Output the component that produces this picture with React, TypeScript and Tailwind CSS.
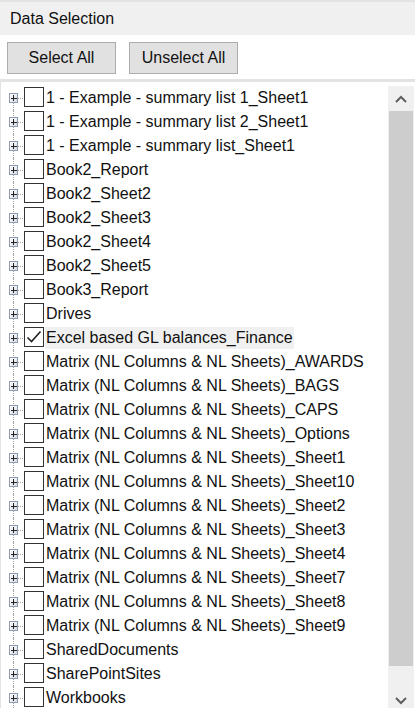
import React, { useState } from 'react';

const items: string[] = [
  '1 - Example - summary list 1_Sheet1',
  '1 - Example - summary list 2_Sheet1',
  '1 - Example - summary list_Sheet1',
  'Book2_Report',
  'Book2_Sheet2',
  'Book2_Sheet3',
  'Book2_Sheet4',
  'Book2_Sheet5',
  'Book3_Report',
  'Drives',
  'Excel based GL balances_Finance',
  'Matrix (NL Columns & NL Sheets)_AWARDS',
  'Matrix (NL Columns & NL Sheets)_BAGS',
  'Matrix (NL Columns & NL Sheets)_CAPS',
  'Matrix (NL Columns & NL Sheets)_Options',
  'Matrix (NL Columns & NL Sheets)_Sheet1',
  'Matrix (NL Columns & NL Sheets)_Sheet10',
  'Matrix (NL Columns & NL Sheets)_Sheet2',
  'Matrix (NL Columns & NL Sheets)_Sheet3',
  'Matrix (NL Columns & NL Sheets)_Sheet4',
  'Matrix (NL Columns & NL Sheets)_Sheet7',
  'Matrix (NL Columns & NL Sheets)_Sheet8',
  'Matrix (NL Columns & NL Sheets)_Sheet9',
  'SharedDocuments',
  'SharePointSites',
  'Workbooks',
];

const Expander: React.FC<{ first: boolean }> = ({ first }) => (
  <div className="relative w-[9px] h-full flex items-center">
    {/* dotted tree line */}
    <div
      className={`absolute left-[4px] w-0 border-l border-dotted border-[#a0a0a0] ${first ? 'top-[12px]' : 'top-0'} bottom-0`}
    />
    <div className="absolute left-[9px] top-[12px] w-[5px] h-0 border-t border-dotted border-[#a0a0a0]" />
    <div className="relative w-[10px] h-[10px] border border-[#8e9bb0] bg-[linear-gradient(135deg,#ffffff,#d6dce6)] flex items-center justify-center">
      <div className="absolute w-[6px] h-[1px] bg-[#222]" />
      <div className="absolute w-[1px] h-[6px] bg-[#222]" />
    </div>
  </div>
);

const Row: React.FC<{ label: string; first: boolean; checked: boolean; onToggle: () => void }> = ({
  label,
  first,
  checked,
  onToggle,
}) => (
  <div className="h-[24px] flex items-center pl-[8px]">
    <Expander first={first} />
    <button
      onClick={onToggle}
      className="ml-[6px] w-[20px] h-[20px] -mt-[2px] border border-[#333] bg-white flex items-center justify-center"
    >
      {checked && (
        <svg width="16" height="14" viewBox="0 0 16 14">
          <path d="M1.5 7.5 L5.5 11.5 L14.5 1.5" fill="none" stroke="#222" strokeWidth="1.6" />
        </svg>
      )}
    </button>
    <span className={`ml-[1px] pl-[1px] pr-[1px] whitespace-nowrap leading-[22px] ${checked ? 'bg-[#f0f0f0]' : ''}`}>
      {label}
    </span>
  </div>
);

const App: React.FC = () => {
  const [checked, setChecked] = useState<Set<number>>(new Set([10]));

  const toggle = (i: number) => {
    const next = new Set(checked);
    if (next.has(i)) next.delete(i);
    else next.add(i);
    setChecked(next);
  };

  return (
    <div className="w-[415px] h-[708px] overflow-hidden bg-white text-[16px] text-[#111] flex flex-col font-['Liberation_Sans',Arial,sans-serif]">
      <div className="h-[35px] shrink-0 bg-[#f0f0f0] border-t-2 border-[#e3e3e3] flex items-center pl-[10px]">
        Data Selection
      </div>

      <div className="h-[44px] shrink-0 flex items-start pt-[7px] pl-[7px] gap-[13px]">
        <button
          onClick={() => setChecked(new Set(items.map((_, i) => i)))}
          className="w-[109px] h-[32px] bg-[#e1e1e1] border border-[#adadad]"
        >
          Select All
        </button>
        <button
          onClick={() => setChecked(new Set())}
          className="w-[109px] h-[32px] bg-[#e1e1e1] border border-[#adadad]"
        >
          Unselect All
        </button>
      </div>

      <div className="h-[3px] shrink-0 bg-[#e3e3e3]" />

      <div className="flex-1 flex min-h-0 border-l border-[#e3e3e3]">
        <div className="flex-1 pt-[4px] overflow-hidden">
          {items.map((label, i) => (
            <Row
              key={label}
              label={label}
              first={i === 0}
              checked={checked.has(i)}
              onToggle={() => toggle(i)}
            />
          ))}
        </div>

        <div className="w-[26px] mr-[1px] mt-[4px] shrink-0 flex flex-col bg-[#f0f0f0]">
          <div className="h-[25px] shrink-0 flex items-center justify-center">
            <svg width="12" height="8" viewBox="0 0 12 8">
              <path d="M1 7 L6 2 L11 7" fill="none" stroke="#606060" strokeWidth="2" />
            </svg>
          </div>
          <div className="h-[555px] shrink-0 mx-[1px] bg-[#cdcdcd]" />
          <div className="flex-1 flex items-end justify-center pb-[3px]">
            <svg width="12" height="8" viewBox="0 0 12 8">
              <path d="M1 1 L6 6 L11 1" fill="none" stroke="#606060" strokeWidth="2" />
            </svg>
          </div>
        </div>
      </div>
    </div>
  );
};

export default App;
